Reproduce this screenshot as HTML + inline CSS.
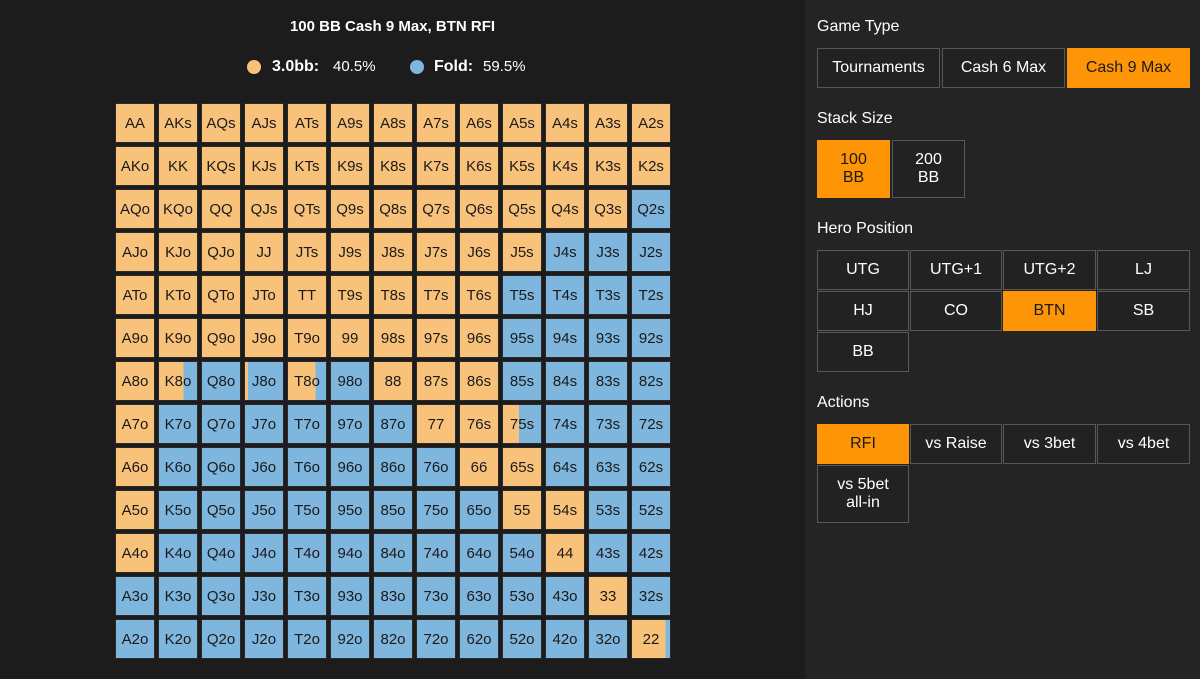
<!DOCTYPE html>
<html><head><style>
*{box-sizing:border-box;margin:0;padding:0}
body{width:1200px;height:679px;background:#1c1c1c;font-family:"Liberation Sans",sans-serif;position:relative;overflow:hidden}
.title{position:absolute;left:0;width:785px;top:18px;text-align:center;color:#fff;font-weight:bold;font-size:15px}
.l{position:absolute;top:58px;color:#fff;font-size:15px;white-space:pre}
.dot{position:absolute;top:60px;width:14px;height:14px;border-radius:50%}
.grid{position:absolute;left:115px;top:103px;display:grid;grid-template-columns:repeat(13,40px);grid-auto-rows:40px;gap:3px}
.grid div{display:flex;align-items:center;justify-content:center;font-size:15px;color:#1a1a1a;border:1px solid #2a2a2a;border-radius:1px}
.o{background:#f8c27a}.b{background:#7fb6dd}
.side{position:absolute;left:805px;top:0;width:395px;height:679px;background:#242424}
.h{position:absolute;left:817px;color:#fff;font-size:16px}
.btn{position:absolute;border:1px solid #585858;background:#222;color:#fff;font-size:16px;display:flex;align-items:center;justify-content:center;text-align:center;line-height:18px}
.on{background:#fd9507;color:#1a1a1a;border-color:#fd9507}
</style></head><body>
<div class="side"></div>
<div class="title">100 BB Cash 9 Max, BTN RFI</div>
<span class="dot" style="left:247px;background:#f8c27a"></span>
<span class="l" style="left:272px;font-weight:bold;font-size:16px">3.0bb:</span>
<span class="l" style="left:333px">40.5%</span>
<span class="dot" style="left:410px;background:#7fb6dd"></span>
<span class="l" style="left:434px;font-weight:bold;font-size:16px">Fold:</span>
<span class="l" style="left:483px">59.5%</span>
<div class="grid">
<div class="o">AA</div><div class="o">AKs</div><div class="o">AQs</div><div class="o">AJs</div><div class="o">ATs</div><div class="o">A9s</div><div class="o">A8s</div><div class="o">A7s</div><div class="o">A6s</div><div class="o">A5s</div><div class="o">A4s</div><div class="o">A3s</div><div class="o">A2s</div>
<div class="o">AKo</div><div class="o">KK</div><div class="o">KQs</div><div class="o">KJs</div><div class="o">KTs</div><div class="o">K9s</div><div class="o">K8s</div><div class="o">K7s</div><div class="o">K6s</div><div class="o">K5s</div><div class="o">K4s</div><div class="o">K3s</div><div class="o">K2s</div>
<div class="o">AQo</div><div class="o">KQo</div><div class="o">QQ</div><div class="o">QJs</div><div class="o">QTs</div><div class="o">Q9s</div><div class="o">Q8s</div><div class="o">Q7s</div><div class="o">Q6s</div><div class="o">Q5s</div><div class="o">Q4s</div><div class="o">Q3s</div><div class="b">Q2s</div>
<div class="o">AJo</div><div class="o">KJo</div><div class="o">QJo</div><div class="o">JJ</div><div class="o">JTs</div><div class="o">J9s</div><div class="o">J8s</div><div class="o">J7s</div><div class="o">J6s</div><div class="o">J5s</div><div class="b">J4s</div><div class="b">J3s</div><div class="b">J2s</div>
<div class="o">ATo</div><div class="o">KTo</div><div class="o">QTo</div><div class="o">JTo</div><div class="o">TT</div><div class="o">T9s</div><div class="o">T8s</div><div class="o">T7s</div><div class="o">T6s</div><div class="b">T5s</div><div class="b">T4s</div><div class="b">T3s</div><div class="b">T2s</div>
<div class="o">A9o</div><div class="o">K9o</div><div class="o">Q9o</div><div class="o">J9o</div><div class="o">T9o</div><div class="o">99</div><div class="o">98s</div><div class="o">97s</div><div class="o">96s</div><div class="b">95s</div><div class="b">94s</div><div class="b">93s</div><div class="b">92s</div>
<div class="o">A8o</div><div style="background:linear-gradient(90deg,#f8c27a 65%,#7fb6dd 65%)">K8o</div><div class="b">Q8o</div><div style="background:linear-gradient(90deg,#f8c27a 8%,#7fb6dd 8%)">J8o</div><div style="background:linear-gradient(90deg,#f8c27a 72%,#7fb6dd 72%)">T8o</div><div class="b">98o</div><div class="o">88</div><div class="o">87s</div><div class="o">86s</div><div class="b">85s</div><div class="b">84s</div><div class="b">83s</div><div class="b">82s</div>
<div class="o">A7o</div><div class="b">K7o</div><div class="b">Q7o</div><div class="b">J7o</div><div class="b">T7o</div><div class="b">97o</div><div class="b">87o</div><div class="o">77</div><div class="o">76s</div><div style="background:linear-gradient(90deg,#f8c27a 42%,#7fb6dd 42%)">75s</div><div class="b">74s</div><div class="b">73s</div><div class="b">72s</div>
<div class="o">A6o</div><div class="b">K6o</div><div class="b">Q6o</div><div class="b">J6o</div><div class="b">T6o</div><div class="b">96o</div><div class="b">86o</div><div class="b">76o</div><div class="o">66</div><div class="o">65s</div><div class="b">64s</div><div class="b">63s</div><div class="b">62s</div>
<div class="o">A5o</div><div class="b">K5o</div><div class="b">Q5o</div><div class="b">J5o</div><div class="b">T5o</div><div class="b">95o</div><div class="b">85o</div><div class="b">75o</div><div class="b">65o</div><div class="o">55</div><div class="o">54s</div><div class="b">53s</div><div class="b">52s</div>
<div class="o">A4o</div><div class="b">K4o</div><div class="b">Q4o</div><div class="b">J4o</div><div class="b">T4o</div><div class="b">94o</div><div class="b">84o</div><div class="b">74o</div><div class="b">64o</div><div class="b">54o</div><div class="o">44</div><div class="b">43s</div><div class="b">42s</div>
<div class="b">A3o</div><div class="b">K3o</div><div class="b">Q3o</div><div class="b">J3o</div><div class="b">T3o</div><div class="b">93o</div><div class="b">83o</div><div class="b">73o</div><div class="b">63o</div><div class="b">53o</div><div class="b">43o</div><div class="o">33</div><div class="b">32s</div>
<div class="b">A2o</div><div class="b">K2o</div><div class="b">Q2o</div><div class="b">J2o</div><div class="b">T2o</div><div class="b">92o</div><div class="b">82o</div><div class="b">72o</div><div class="b">62o</div><div class="b">52o</div><div class="b">42o</div><div class="b">32o</div><div style="background:linear-gradient(90deg,#f8c27a 88%,#7fb6dd 88%)">22</div>
</div>

<div class="h" style="top:18px">Game Type</div>
<div class="btn" style="left:817px;top:48px;width:123px;height:40px">Tournaments</div>
<div class="btn" style="left:942px;top:48px;width:123px;height:40px">Cash 6 Max</div>
<div class="btn on" style="left:1067px;top:48px;width:123px;height:40px">Cash 9 Max</div>

<div class="h" style="top:110px">Stack Size</div>
<div class="btn on" style="left:817px;top:140px;width:73px;height:58px">100<br>BB</div>
<div class="btn" style="left:892px;top:140px;width:73px;height:58px">200<br>BB</div>

<div class="h" style="top:220px">Hero Position</div>
<div class="btn" style="left:817px;top:250px;width:92px;height:40px">UTG</div>
<div class="btn" style="left:910px;top:250px;width:92px;height:40px">UTG+1</div>
<div class="btn" style="left:1003px;top:250px;width:93px;height:40px">UTG+2</div>
<div class="btn" style="left:1097px;top:250px;width:93px;height:40px">LJ</div>
<div class="btn" style="left:817px;top:291px;width:92px;height:40px">HJ</div>
<div class="btn" style="left:910px;top:291px;width:92px;height:40px">CO</div>
<div class="btn on" style="left:1003px;top:291px;width:93px;height:40px">BTN</div>
<div class="btn" style="left:1097px;top:291px;width:93px;height:40px">SB</div>
<div class="btn" style="left:817px;top:332px;width:92px;height:40px">BB</div>

<div class="h" style="top:394px">Actions</div>
<div class="btn on" style="left:817px;top:424px;width:92px;height:40px">RFI</div>
<div class="btn" style="left:910px;top:424px;width:92px;height:40px">vs Raise</div>
<div class="btn" style="left:1003px;top:424px;width:93px;height:40px">vs 3bet</div>
<div class="btn" style="left:1097px;top:424px;width:93px;height:40px">vs 4bet</div>
<div class="btn" style="left:817px;top:465px;width:92px;height:58px">vs 5bet<br>all-in</div>
</body></html>
